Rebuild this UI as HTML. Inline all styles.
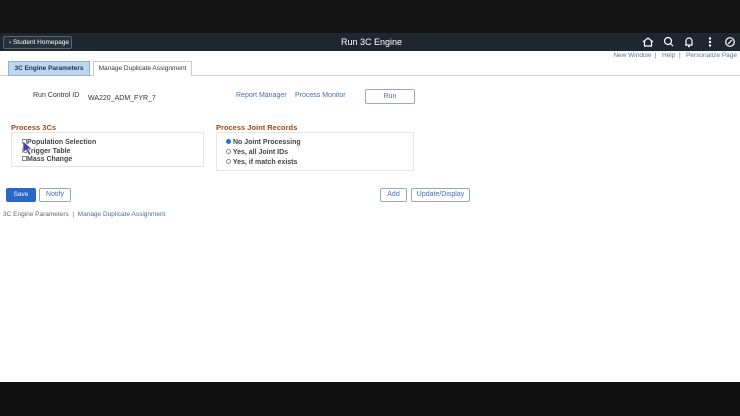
<!DOCTYPE html>
<html><head><style>
*{margin:0;padding:0;box-sizing:border-box}
body{width:740px;height:416px;background:#111;font-family:"Liberation Sans",sans-serif;position:relative;overflow:hidden}
.a{position:absolute;white-space:nowrap}
#top{left:0;top:0;width:740px;height:33px;background:#141414}
#hdr{left:0;top:33px;width:740px;height:18px;background:#1e2730}
#main{left:0;top:51px;width:740px;height:331px;background:#fff}
.lnk{color:#4a6da8;font-size:7px}
.btn{border:1px solid #9aa7c3;border-radius:2px;background:#fff;color:#4a6da8;font-size:7px;text-align:center}
.lbl{font-size:7px;color:#333}
.h{font-size:7.5px;font-weight:bold;color:#a04a1a}
</style></head><body>
<div class="a" id="top"></div>
<div class="a" id="hdr"></div>
<div class="a" id="main"></div>
<div class="a" style="left:3px;top:36px;width:69px;height:13px;border:1px solid #59636d;border-radius:2px;background:#27323c;color:#fff;font-size:6.5px;line-height:11px;padding-left:5px">&#8249; Student Homepage</div>
<div class="a" style="left:341px;top:37px;color:#fff;font-size:9px">Run 3C Engine</div>
<svg class="a" style="left:640px;top:35px" width="100" height="14" viewBox="0 0 100 14" fill="none" stroke="#fff" stroke-width="1.2">
<path d="M3 7L8 3L13 7M4.5 6V11H11.5V6"/>
<circle cx="28" cy="6" r="3.5"/><path d="M30.5 8.5L33 11"/>
<path d="M46 10V6A3 3 0 0 1 52 6V10H45M48 11.5H50"/>
<circle cx="70" cy="3.5" r=".6" fill="#fff"/><circle cx="70" cy="7" r=".6" fill="#fff"/><circle cx="70" cy="10.5" r=".6" fill="#fff"/>
<circle cx="90" cy="7" r="4.3"/><path d="M88 9L92 5"/>
</svg>
<div class="a lnk" style="right:3px;top:52px;color:#5a74a8;font-size:6.5px">New Window &nbsp;| &nbsp;&nbsp;Help &nbsp;| &nbsp;&nbsp;Personalize Page</div>
<div class="a" style="left:0;top:75px;width:740px;height:1px;background:#ccc"></div>
<div class="a" style="left:8px;top:61px;width:82px;height:15px;background:#bcd7ef;border:1px solid #8fb4d8;font-size:6.5px;font-weight:bold;color:#1d2f4d;text-align:center;line-height:13px">3C Engine Parameters</div>
<div class="a" style="left:93px;top:61px;width:99px;height:15px;background:#fff;border:1px solid #ccc;border-bottom:none;font-size:6.5px;color:#333;text-align:center;line-height:13px">Manage Duplicate Assignment</div>
<div class="a lbl" style="left:33px;top:92px">Run Control ID</div>
<div class="a lbl" style="left:88px;top:95px">WA220_ADM_FYR_7</div>
<div class="a lnk" style="left:236px;top:92px">Report Manager</div>
<div class="a lnk" style="left:295px;top:92px">Process Monitor</div>
<div class="a btn" style="left:365px;top:89px;width:50px;height:15px;line-height:13px">Run</div>
<div class="a h" style="left:11px;top:123px">Process 3Cs</div>
<div class="a h" style="left:216px;top:123px">Process Joint Records</div>
<div class="a" style="left:11px;top:132px;width:193px;height:35px;border:1px solid #e6e6e6"></div>
<div class="a" style="left:216px;top:132px;width:198px;height:39px;border:1px solid #e6e6e6"></div>
<div class="a lbl" style="left:22px;top:139px;line-height:8.5px;font-weight:bold;color:#444">
<span style="display:inline-block;width:5px;height:5px;border:1px solid #888"></span>Population Selection<br><span style="display:inline-block;width:5px;height:5px;border:1px solid #888"></span>Trigger Table<br><span style="display:inline-block;width:5px;height:5px;border:1px solid #888"></span>Mass Change</div>
<svg class="a" style="left:22px;top:140px" width="12" height="16"><path d="M1 1L1 13L4 10L7 15L9 14L6 9L10 9Z" fill="#4b3fa0" stroke="#fff" stroke-width=".6"/></svg>
<div class="a lbl" style="left:226px;top:138px;line-height:10px;font-weight:bold;color:#444">
<span style="display:inline-block;width:5px;height:5px;border-radius:50%;background:#2b6fd0"></span> No Joint Processing<br><span style="display:inline-block;width:5px;height:5px;border-radius:50%;border:1px solid #888"></span> Yes, all Joint IDs<br><span style="display:inline-block;width:5px;height:5px;border-radius:50%;border:1px solid #888"></span> Yes, if match exists</div>
<div class="a" style="left:6px;top:188px;width:30px;height:14px;background:#2a68c8;border-radius:2px;color:#fff;font-size:6.5px;text-align:center;line-height:14px">Save</div>
<div class="a btn" style="left:39px;top:188px;width:32px;height:14px;line-height:12px">Notify</div>
<div class="a btn" style="left:380px;top:188px;width:27px;height:14px;line-height:12px">Add</div>
<div class="a btn" style="left:411px;top:188px;width:59px;height:14px;line-height:12px">Update/Display</div>
<div class="a" style="left:3px;top:211px;font-size:6.5px;color:#666">3C Engine Parameters &nbsp;| &nbsp;<span style="color:#4a6da8">Manage Duplicate Assignment</span></div>
</body></html>
